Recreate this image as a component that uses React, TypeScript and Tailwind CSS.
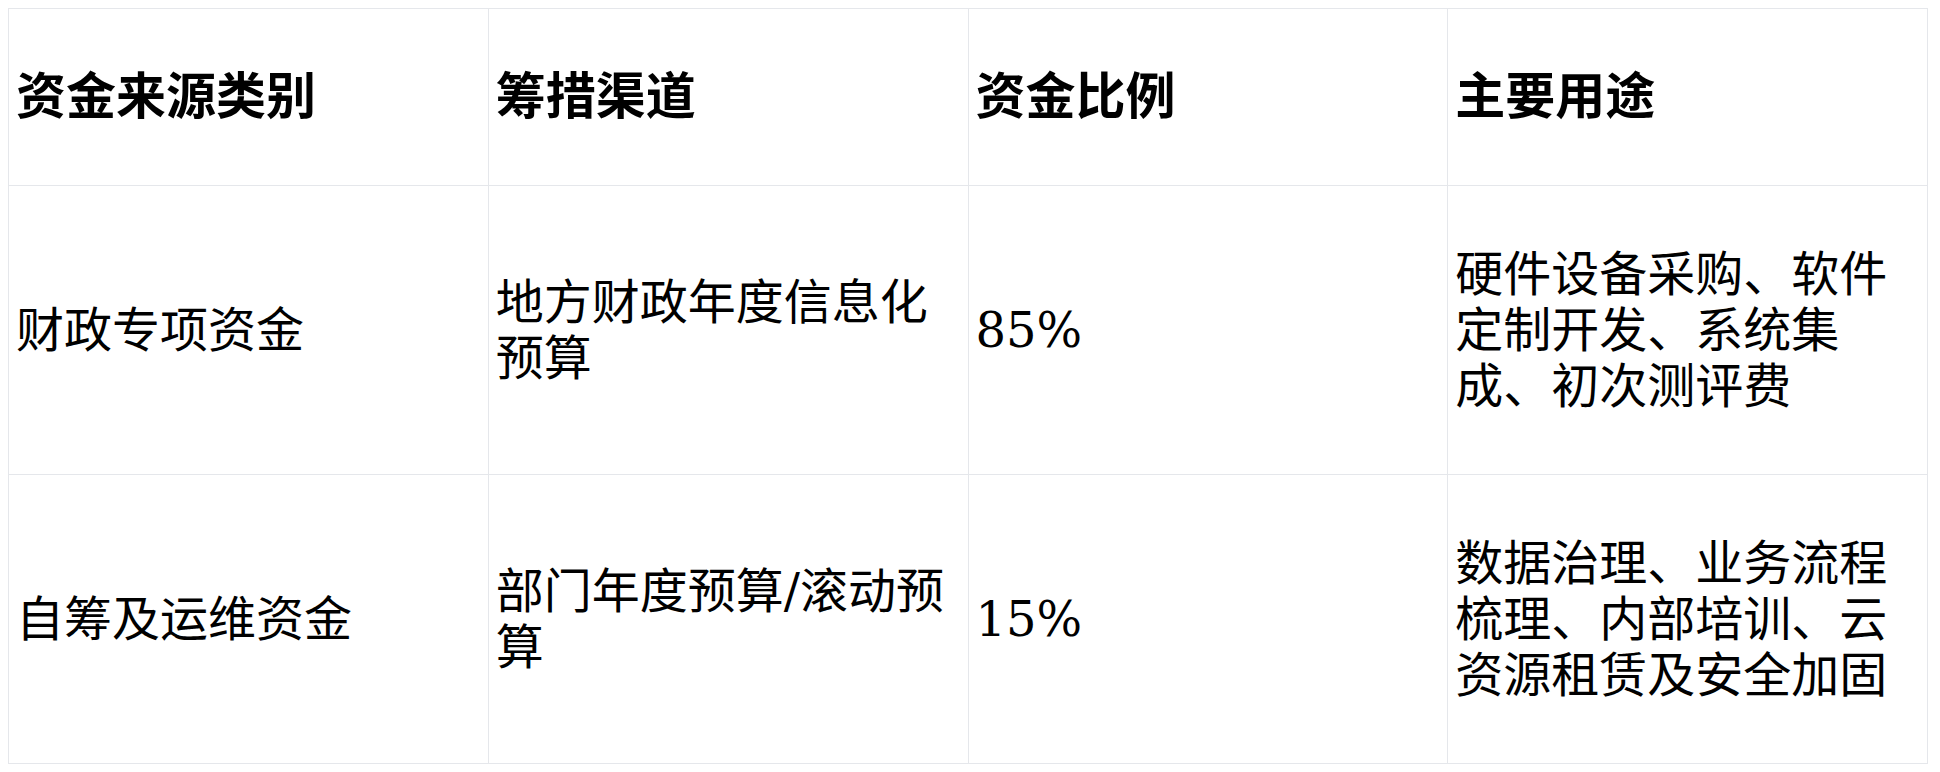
import React from 'react';

interface FundRow {
  source: string;
  channel: string;
  ratio: string;
  usage: string;
}

const rows: FundRow[] = [
  {
    source: '财政专项资金',
    channel: '地方财政年度信息化预算',
    ratio: '85%',
    usage: '硬件设备采购、软件定制开发、系统集成、初次测评费',
  },
  {
    source: '自筹及运维资金',
    channel: '部门年度预算/滚动预算',
    ratio: '15%',
    usage: '数据治理、业务流程梳理、内部培训、云资源租赁及安全加固',
  },
];

const headers = ['资金来源类别', '筹措渠道', '资金比例', '主要用途'];

const cell = 'border border-[#e5e7eb] px-[7px] py-[60px] align-middle text-left';

const App: React.FC = () => {
  return (
    <div className="bg-white min-h-screen p-2 font-['DejaVu_Serif','Noto_Sans_CJK_SC',serif] text-[48px] leading-[56px] text-black">
      <table className="w-[1920px] table-fixed border-collapse">
        <thead>
          <tr>
            {headers.map((h) => (
              <th key={h} className={`${cell} text-[50px] font-bold`}>
                {h}
              </th>
            ))}
          </tr>
        </thead>
        <tbody>
          {rows.map((r) => (
            <tr key={r.source}>
              <td className={cell}>{r.source}</td>
              <td className={cell}>{r.channel}</td>
              <td className={cell}>{r.ratio}</td>
              <td className={cell}>{r.usage}</td>
            </tr>
          ))}
        </tbody>
      </table>
    </div>
  );
};

export default App;
